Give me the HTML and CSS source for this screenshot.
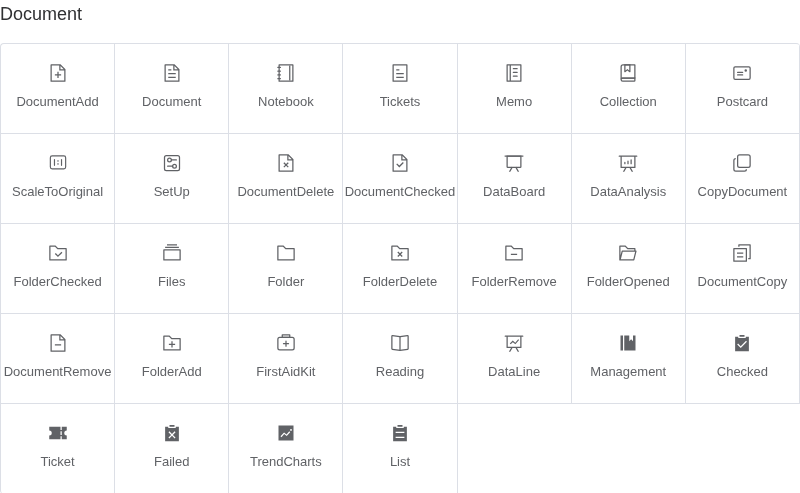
FILE: index.html
```html
<!DOCTYPE html>
<html lang="en">
<head>
<meta charset="utf-8">
<title>Document icons</title>
<link rel="stylesheet" href="styles.css">
</head>
<body>
<h1 class="title">Document</h1>
<ul class="icon-grid">
<li class="cell"><svg class="icon" viewBox="0 0 1024 1024"><path d="M832 384H576V128H192v768h640zm-26.496-64L640 154.496V320zM160 64h480l256 256v608a32 32 0 0 1-32 32H160a32 32 0 0 1-32-32V96a32 32 0 0 1 32-32m320 512V448h64v128h128v64H544v128h-64V640H352v-64z"/></svg><span class="label">DocumentAdd</span></li>
<li class="cell"><svg class="icon" viewBox="0 0 1024 1024"><path d="M832 384H576V128H192v768h640zm-26.496-64L640 154.496V320zM160 64h480l256 256v608a32 32 0 0 1-32 32H160a32 32 0 0 1-32-32V96a32 32 0 0 1 32-32m160 448h384v64H320zm0-192h160v64H320zm0 384h384v64H320z"/></svg><span class="label">Document</span></li>
<li class="cell"><svg class="icon" viewBox="0 0 1024 1024"><path d="M192 128v768h640V128zm-32-64h704a32 32 0 0 1 32 32v832a32 32 0 0 1-32 32H160a32 32 0 0 1-32-32V96a32 32 0 0 1 32-32"/><path d="M672 128h64v768h-64zM96 192h128q32 0 32 32t-32 32H96q-32 0-32-32t32-32m0 192h128q32 0 32 32t-32 32H96q-32 0-32-32t32-32m0 192h128q32 0 32 32t-32 32H96q-32 0-32-32t32-32m0 192h128q32 0 32 32t-32 32H96q-32 0-32-32t32-32"/></svg><span class="label">Notebook</span></li>
<li class="cell"><svg class="icon" viewBox="0 0 1024 1024"><path d="M192 128v768h640V128zm-32-64h704a32 32 0 0 1 32 32v832a32 32 0 0 1-32 32H160a32 32 0 0 1-32-32V96a32 32 0 0 1 32-32m160 448h384v64H320zm0-192h160v64H320zm0 384h384v64H320z"/></svg><span class="label">Tickets</span></li>
<li class="cell"><svg class="icon" viewBox="0 0 1024 1024"><path d="M480 320h192c21.33 0 32-10.67 32-32s-10.67-32-32-32H480c-21.33 0-32 10.67-32 32s10.67 32 32 32"/><path d="M887.01 72.99C881.01 67 873.34 64 864 64H160c-9.35 0-17.02 3-23.01 8.99C131 78.99 128 86.66 128 96v832c0 9.35 2.99 17.02 8.99 23.01S150.66 960 160 960h704c9.35 0 17.02-2.99 23.01-8.99S896 937.34 896 928V96c0-9.35-3-17.02-8.99-23.01M192 896V128h96v768zm640 0H352V128h480z"/><path d="M480 512h192c21.33 0 32-10.67 32-32s-10.67-32-32-32H480c-21.33 0-32 10.67-32 32s10.67 32 32 32m0 192h192c21.33 0 32-10.67 32-32s-10.67-32-32-32H480c-21.33 0-32 10.67-32 32s10.67 32 32 32"/></svg><span class="label">Memo</span></li>
<li class="cell"><svg class="icon" viewBox="0 0 1024 1024"><path d="M192 736h640V128H256a64 64 0 0 0-64 64zm64-672h608a32 32 0 0 1 32 32v672a32 32 0 0 1-32 32H160l-32 57.536V192A128 128 0 0 1 256 64"/><path d="M240 800a48 48 0 1 0 0 96h592v-96zm0-64h656v160a64 64 0 0 1-64 64H240a112 112 0 0 1 0-224m144-608v250.88l96-76.8 96 76.8V128zm-64-64h320v381.44a32 32 0 0 1-51.968 24.96L480 384l-108.032 86.4A32 32 0 0 1 320 445.44z"/></svg><span class="label">Collection</span></li>
<li class="cell"><svg class="icon" viewBox="0 0 1024 1024"><path d="M160 224a32 32 0 0 0-32 32v512a32 32 0 0 0 32 32h704a32 32 0 0 0 32-32V256a32 32 0 0 0-32-32zm0-64h704a96 96 0 0 1 96 96v512a96 96 0 0 1-96 96H160a96 96 0 0 1-96-96V256a96 96 0 0 1 96-96"/><path d="M704 320a64 64 0 1 1 0 128 64 64 0 0 1 0-128M288 448h256q32 0 32 32t-32 32H288q-32 0-32-32t32-32m0 128h256q32 0 32 32t-32 32H288q-32 0-32-32t32-32"/></svg><span class="label">Postcard</span></li>

<li class="cell"><svg class="icon" viewBox="0 0 1024 1024"><path d="M813.176 180.706a60.235 60.235 0 0 1 60.236 60.235v481.883a60.235 60.235 0 0 1-60.236 60.235H210.824a60.235 60.235 0 0 1-60.236-60.235V240.94a60.235 60.235 0 0 1 60.236-60.235h602.352zm0-60.235H210.824A120.47 120.47 0 0 0 90.353 240.94v481.883a120.47 120.47 0 0 0 120.47 120.47h602.353a120.47 120.47 0 0 0 120.471-120.47V240.94a120.47 120.47 0 0 0-120.47-120.47zm-120.47 180.705a30.118 30.118 0 0 0-30.118 30.118v301.177a30.118 30.118 0 0 0 60.236 0V331.294a30.118 30.118 0 0 0-30.118-30.118m-361.412 0a30.118 30.118 0 0 0-30.118 30.118v301.177a30.118 30.118 0 1 0 60.236 0V331.294a30.118 30.118 0 0 0-30.118-30.118M512 361.412a30.118 30.118 0 0 0-30.118 30.117v30.118a30.118 30.118 0 0 0 60.236 0V391.53A30.118 30.118 0 0 0 512 361.412M512 512a30.118 30.118 0 0 0-30.118 30.118v30.117a30.118 30.118 0 0 0 60.236 0v-30.117A30.118 30.118 0 0 0 512 512"/></svg><span class="label">ScaleToOriginal</span></li>
<li class="cell"><svg class="icon" viewBox="0 0 1024 1024"><path d="M224 160a64 64 0 0 0-64 64v576a64 64 0 0 0 64 64h576a64 64 0 0 0 64-64V224a64 64 0 0 0-64-64zm0-64h576a128 128 0 0 1 128 128v576a128 128 0 0 1-128 128H224A128 128 0 0 1 96 800V224A128 128 0 0 1 224 96"/><path d="M384 416a64 64 0 1 0 0-128 64 64 0 0 0 0 128m0 64a128 128 0 1 1 0-256 128 128 0 0 1 0 256"/><path d="M480 320h256q32 0 32 32t-32 32H480q-32 0-32-32t32-32m160 416a64 64 0 1 0 0-128 64 64 0 0 0 0 128m0 64a128 128 0 1 1 0-256 128 128 0 0 1 0 256"/><path d="M288 640h256q32 0 32 32t-32 32H288q-32 0-32-32t32-32"/></svg><span class="label">SetUp</span></li>
<li class="cell"><svg class="icon" viewBox="0 0 1024 1024"><path d="M805.504 320 640 154.496V320zM832 384H576V128H192v768h640zM160 64h480l256 256v608a32 32 0 0 1-32 32H160a32 32 0 0 1-32-32V96a32 32 0 0 1 32-32m308.992 546.304-90.496-90.624 45.248-45.248 90.56 90.496 90.496-90.432 45.248 45.248-90.496 90.56 90.496 90.496-45.248 45.248-90.496-90.496-90.56 90.496-45.248-45.248z"/></svg><span class="label">DocumentDelete</span></li>
<li class="cell"><svg class="icon" viewBox="0 0 1024 1024"><path d="M805.504 320 640 154.496V320zM832 384H576V128H192v768h640zM160 64h480l256 256v608a32 32 0 0 1-32 32H160a32 32 0 0 1-32-32V96a32 32 0 0 1 32-32m318.4 582.144 180.992-180.992L704.64 510.4 478.4 736.64 320 578.304l45.248-45.312z"/></svg><span class="label">DocumentChecked</span></li>
<li class="cell"><svg class="icon" viewBox="0 0 1024 1024"><path d="M32 128h960v64H32z"/><path d="M192 192v512h640V192zm-64-64h768v576a64 64 0 0 1-64 64H192a64 64 0 0 1-64-64z"/><path d="M322.176 960H248.32l144.64-250.56 55.424 32zm453.888 0h-73.856L576 741.44l55.424-32z"/></svg><span class="label">DataBoard</span></li>
<li class="cell"><svg class="icon" viewBox="0 0 1024 1024"><path d="m665.216 768 110.848 192h-73.856L591.36 768H433.024L322.176 960H248.32l110.848-192H160a32 32 0 0 1-32-32V192H64a32 32 0 0 1 0-64h896a32 32 0 1 1 0 64h-64v544a32 32 0 0 1-32 32zM832 192H192v512h640zM352 448a32 32 0 0 1 32 32v64a32 32 0 0 1-64 0v-64a32 32 0 0 1 32-32m160-64a32 32 0 0 1 32 32v128a32 32 0 0 1-64 0V416a32 32 0 0 1 32-32m160-64a32 32 0 0 1 32 32v192a32 32 0 1 1-64 0V352a32 32 0 0 1 32-32"/></svg><span class="label">DataAnalysis</span></li>
<li class="cell"><svg class="icon" viewBox="0 0 1024 1024"><path d="M768 832a128 128 0 0 1-128 128H192A128 128 0 0 1 64 832V384a128 128 0 0 1 128-128v64a64 64 0 0 0-64 64v448a64 64 0 0 0 64 64h448a64 64 0 0 0 64-64z"/><path d="M384 128a64 64 0 0 0-64 64v448a64 64 0 0 0 64 64h448a64 64 0 0 0 64-64V192a64 64 0 0 0-64-64zm0-64h448a128 128 0 0 1 128 128v448a128 128 0 0 1-128 128H384a128 128 0 0 1-128-128V192A128 128 0 0 1 384 64"/></svg><span class="label">CopyDocument</span></li>

<li class="cell"><svg class="icon" viewBox="0 0 1024 1024"><path d="M128 192v640h768V320H485.76L357.504 192zm-32-64h287.872l128.384 128H928a32 32 0 0 1 32 32v576a32 32 0 0 1-32 32H96a32 32 0 0 1-32-32V160a32 32 0 0 1 32-32m414.08 502.144 180.992-180.992L736.32 494.4 510.08 720.64 351.68 562.304l45.248-45.312z"/></svg><span class="label">FolderChecked</span></li>
<li class="cell"><svg class="icon" viewBox="0 0 1024 1024"><path d="M128 384v448h768V384zm-32-64h832a32 32 0 0 1 32 32v512a32 32 0 0 1-32 32H96a32 32 0 0 1-32-32V352a32 32 0 0 1 32-32m64-128h704v64H160zm96-128h512v64H256z"/></svg><span class="label">Files</span></li>
<li class="cell"><svg class="icon" viewBox="0 0 1024 1024"><path d="M128 192v640h768V320H485.76L357.504 192zm-32-64h287.872l128.384 128H928a32 32 0 0 1 32 32v576a32 32 0 0 1-32 32H96a32 32 0 0 1-32-32V160a32 32 0 0 1 32-32"/></svg><span class="label">Folder</span></li>
<li class="cell"><svg class="icon" viewBox="0 0 1024 1024"><path d="M128 192v640h768V320H485.76L357.504 192zm-32-64h287.872l128.384 128H928a32 32 0 0 1 32 32v576a32 32 0 0 1-32 32H96a32 32 0 0 1-32-32V160a32 32 0 0 1 32-32m370.752 448-90.496-90.496 45.248-45.248L512 530.752l90.496-90.496 45.248 45.248L557.248 576l90.496 90.496-45.248 45.248L512 621.248l-90.496 90.496-45.248-45.248z"/></svg><span class="label">FolderDelete</span></li>
<li class="cell"><svg class="icon" viewBox="0 0 1024 1024"><path d="M128 192v640h768V320H485.76L357.504 192zm-32-64h287.872l128.384 128H928a32 32 0 0 1 32 32v576a32 32 0 0 1-32 32H96a32 32 0 0 1-32-32V160a32 32 0 0 1 32-32m256 416h320v64H352z"/></svg><span class="label">FolderRemove</span></li>
<li class="cell"><svg class="icon" viewBox="0 0 1024 1024"><path d="M878.08 448H241.92l-96 384h636.16l96-384zM832 384v-64H485.76L357.504 192H128v448l57.92-231.744A32 32 0 0 1 216.96 384zm-24.96 512H96a32 32 0 0 1-32-32V160a32 32 0 0 1 32-32h287.872l128.384 128H864a32 32 0 0 1 32 32v96h23.04a32 32 0 0 1 31.04 39.744l-112 448A32 32 0 0 1 807.04 896"/></svg><span class="label">FolderOpened</span></li>
<li class="cell"><svg class="icon" viewBox="0 0 1024 1024"><path d="M128 320v576h576V320zm-32-64h640a32 32 0 0 1 32 32v640a32 32 0 0 1-32 32H96a32 32 0 0 1-32-32V288a32 32 0 0 1 32-32M960 96v704a32 32 0 0 1-32 32h-96v-64h64V128H384v64h-64V96a32 32 0 0 1 32-32h576a32 32 0 0 1 32 32M256 672h320v64H256zm0-192h320v64H256z"/></svg><span class="label">DocumentCopy</span></li>

<li class="cell"><svg class="icon" viewBox="0 0 1024 1024"><path d="M805.504 320 640 154.496V320zM832 384H576V128H192v768h640zM160 64h480l256 256v608a32 32 0 0 1-32 32H160a32 32 0 0 1-32-32V96a32 32 0 0 1 32-32m192 512h320v64H352z"/></svg><span class="label">DocumentRemove</span></li>
<li class="cell"><svg class="icon" viewBox="0 0 1024 1024"><path d="M128 192v640h768V320H485.76L357.504 192zm-32-64h287.872l128.384 128H928a32 32 0 0 1 32 32v576a32 32 0 0 1-32 32H96a32 32 0 0 1-32-32V160a32 32 0 0 1 32-32m384 416V416h64v128h128v64H544v128h-64V608H352v-64z"/></svg><span class="label">FolderAdd</span></li>
<li class="cell"><svg class="icon" viewBox="0 0 1024 1024"><path d="M192 256a64 64 0 0 0-64 64v448a64 64 0 0 0 64 64h640a64 64 0 0 0 64-64V320a64 64 0 0 0-64-64zm0-64h640a128 128 0 0 1 128 128v448a128 128 0 0 1-128 128H192A128 128 0 0 1 64 768V320a128 128 0 0 1 128-128"/><path d="M544 512h96a32 32 0 0 1 0 64h-96v96a32 32 0 0 1-64 0v-96h-96a32 32 0 0 1 0-64h96v-96a32 32 0 0 1 64 0zM352 128v64h320v-64zm-32-64h384a32 32 0 0 1 32 32v128a32 32 0 0 1-32 32H320a32 32 0 0 1-32-32V96a32 32 0 0 1 32-32"/></svg><span class="label">FirstAidKit</span></li>
<li class="cell"><svg class="icon" viewBox="0 0 1024 1024"><path d="m512 863.36 384-54.848v-638.72L525.568 222.72a96 96 0 0 1-27.136 0L128 169.792v638.72zM137.024 106.432l370.432 52.928a32 32 0 0 0 9.088 0l370.432-52.928A64 64 0 0 1 960 169.792v638.72a64 64 0 0 1-54.976 63.36l-388.48 55.488a32 32 0 0 1-9.088 0l-388.48-55.488A64 64 0 0 1 64 808.512v-638.72a64 64 0 0 1 73.024-63.36"/><path d="M480 192h64v704h-64z"/></svg><span class="label">Reading</span></li>
<li class="cell"><svg class="icon" viewBox="0 0 1024 1024"><path d="M359.168 768H160a32 32 0 0 1-32-32V192H64a32 32 0 0 1 0-64h896a32 32 0 1 1 0 64h-64v544a32 32 0 0 1-32 32H665.216l110.848 192h-73.856L591.36 768H433.024L322.176 960H248.32zM832 192H192v512h640z"/><path d="M297.344 534.656 448 384l128 112 150.656-173.312 45.312 39.424L582.4 580.16 451.2 467.2 342.656 579.968z"/></svg><span class="label">DataLine</span></li>
<li class="cell"><svg class="icon" viewBox="0 0 1024 1024"><path d="M576 128v288l96-96 96 96V128h128v768H320V128zm-448 0h128v768H128z"/></svg><span class="label">Management</span></li>
<li class="cell"><svg class="icon" viewBox="0 0 1024 1024"><path d="M704 192h160v736H160V192h160.064v64H704zM311.616 537.28l-45.312 45.248L447.36 763.52l316.8-316.8-45.312-45.184L447.36 673.024zM384 192V96h256v96z"/></svg><span class="label">Checked</span></li>

<li class="cell"><svg class="icon" viewBox="0 0 1024 1024"><path d="M640 832H64V640a128 128 0 1 0 0-256V192h576v160h64V192h256v192a128 128 0 1 0 0 256v192H704V672h-64zm0-416v192h64V416z"/></svg><span class="label">Ticket</span></li>
<li class="cell"><svg class="icon" viewBox="0 0 1024 1024"><path d="m557.248 608 135.744-135.744-45.248-45.248-135.68 135.744-135.808-135.68-45.248 45.184L466.752 608l-135.68 135.68 45.184 45.312L512 653.248l135.744 135.744 45.248-45.248L557.312 608zM704 192h160v736H160V192h160v64h384zm-320 0V96h256v96z"/></svg><span class="label">Failed</span></li>
<li class="cell"><svg class="icon" viewBox="0 0 1024 1024"><path d="M128 896V128h768v768zm291.712-327.296 128 102.4 180.16-201.792-47.744-42.624-139.84 156.608-128-102.4-180.16 201.792 47.744 42.624zM816 352a48 48 0 1 0-96 0 48 48 0 0 0 96 0"/></svg><span class="label">TrendCharts</span></li>
<li class="cell"><svg class="icon" viewBox="0 0 1024 1024"><path d="M704 192h160v736H160V192h160v64h384zM288 512h448v-64H288zm0 256h448v-64H288zm96-576V96h256v96z"/></svg><span class="label">List</span></li>
</ul>
</body>
</html>
```

FILE: styles.css
```css
html {
  overflow: hidden;
}

body {
  margin: 0;
  background: #fff;
  font-family: "Liberation Sans", Arial, sans-serif;
}

.title {
  margin: 0 0 18px;
  padding-top: 4px;
  font-size: 18px;
  font-weight: 400;
  line-height: 21px;
  color: #303133;
  filter: blur(0.3px);
}

.icon-grid {
  display: grid;
  grid-template-columns: repeat(7, 1fr);
  margin: 0;
  padding: 0;
  list-style: none;
  border-top: 1px solid #dcdfe6;
  border-left: 1px solid #dcdfe6;
  border-radius: 4px;
  overflow: hidden;
}

.cell {
  box-sizing: border-box;
  height: 90px;
  display: flex;
  flex-direction: column;
  align-items: center;
  padding-top: 19px;
  gap: 10px;
  border-right: 1px solid #dcdfe6;
  border-bottom: 1px solid #dcdfe6;
  color: #606266;
}

.icon {
  width: 20px;
  height: 20px;
  flex: none;
  fill: currentColor;
  filter: blur(0.3px);
}

.label {
  font-size: 13px;
  line-height: 18px;
  white-space: nowrap;
  filter: blur(0.3px);
}
```
